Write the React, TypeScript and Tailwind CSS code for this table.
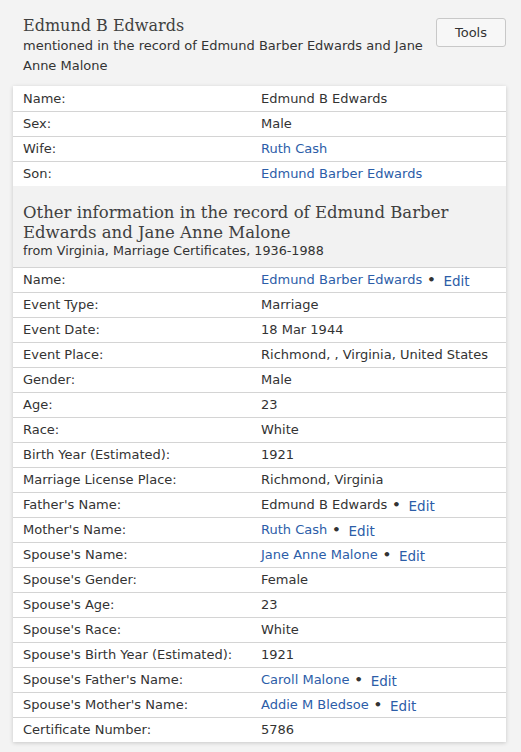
const personRows: { label: string; value: string; link?: boolean }[] = [
  { label: 'Name:', value: 'Edmund B Edwards' },
  { label: 'Sex:', value: 'Male' },
  { label: 'Wife:', value: 'Ruth Cash', link: true },
  { label: 'Son:', value: 'Edmund Barber Edwards', link: true },
];

type Row = { label: string; value: string; link?: boolean; edit?: boolean };

const recordRows: Row[] = [
  { label: 'Name:', value: 'Edmund Barber Edwards', link: true, edit: true },
  { label: 'Event Type:', value: 'Marriage' },
  { label: 'Event Date:', value: '18 Mar 1944' },
  { label: 'Event Place:', value: 'Richmond, , Virginia, United States' },
  { label: 'Gender:', value: 'Male' },
  { label: 'Age:', value: '23' },
  { label: 'Race:', value: 'White' },
  { label: 'Birth Year (Estimated):', value: '1921' },
  { label: 'Marriage License Place:', value: 'Richmond, Virginia' },
  { label: "Father's Name:", value: 'Edmund B Edwards', edit: true },
  { label: "Mother's Name:", value: 'Ruth Cash', link: true, edit: true },
  { label: "Spouse's Name:", value: 'Jane Anne Malone', link: true, edit: true },
  { label: "Spouse's Gender:", value: 'Female' },
  { label: "Spouse's Age:", value: '23' },
  { label: "Spouse's Race:", value: 'White' },
  { label: "Spouse's Birth Year (Estimated):", value: '1921' },
  { label: "Spouse's Father's Name:", value: 'Caroll Malone', link: true, edit: true },
  { label: "Spouse's Mother's Name:", value: 'Addie M Bledsoe', link: true, edit: true },
  { label: 'Certificate Number:', value: '5786' },
];

function DataRow({ row, first }: { row: Row; first?: boolean }) {
  return (
    <div
      className={`flex h-[25px] items-center text-[13px] text-[#333] ${first ? '' : 'border-t border-[#d4d4d4]'}`}
    >
      <div className="w-[248px] shrink-0 pl-[10px]">{row.label}</div>
      <div className="flex items-center">
        <span className={row.link ? 'text-[#2c5da8]' : ''}>{row.value}</span>
        {row.edit && (
          <>
            <span className="ml-[5px] mr-[8px] text-[13px] font-bold text-[#333]">•</span>
            <span className="mt-[2px] text-[13.5px] text-[#2c5da8]">Edit</span>
          </>
        )}
      </div>
    </div>
  );
}

export default function App() {
  return (
    <div
      className="min-h-[752px] bg-[#f3f3f3] pl-[13px] pr-[15px] pt-[16px] pb-[10px]"
      style={{ fontFamily: '"DejaVu Sans", Verdana, sans-serif' }}
    >
      {/* Header */}
      <div className="flex items-start justify-between">
        <div className="pl-[10px]">
          <h1
            className="text-[16px] leading-[20px] text-[#404040]"
            style={{ fontFamily: '"DejaVu Serif", Georgia, serif' }}
          >
            Edmund B Edwards
          </h1>
          <p className="w-[400px] text-[13px] leading-[20px] text-[#333]">
            mentioned in the record of Edmund Barber Edwards and Jane Anne Malone
          </p>
        </div>
        <button className="mt-[2px] h-[29px] w-[70px] rounded-[3px] border border-[#c8c8c8] bg-[#f7f7f7] text-[13px] text-[#333]">
          Tools
        </button>
      </div>

      {/* Card */}
      <div className="mt-[10px] bg-white shadow-[0_1px_4px_rgba(0,0,0,0.18)]">
        {personRows.map((r, i) => (
          <DataRow key={r.label} row={r} first={i === 0} />
        ))}

        <div className="bg-[#f2f2f2] px-[10px] pt-[17px] pb-[8px]">
          <h2
            className="text-[16.5px] leading-[20px] text-[#404040]"
            style={{ fontFamily: '"DejaVu Serif", Georgia, serif' }}
          >
            Other information in the record of Edmund Barber Edwards and Jane Anne Malone
          </h2>
          <p className="text-[12.75px] leading-[16px] text-[#333]">
            from Virginia, Marriage Certificates, 1936-1988
          </p>
        </div>

        {recordRows.map((r) => (
          <DataRow key={r.label} row={r} />
        ))}
      </div>
    </div>
  );
}
